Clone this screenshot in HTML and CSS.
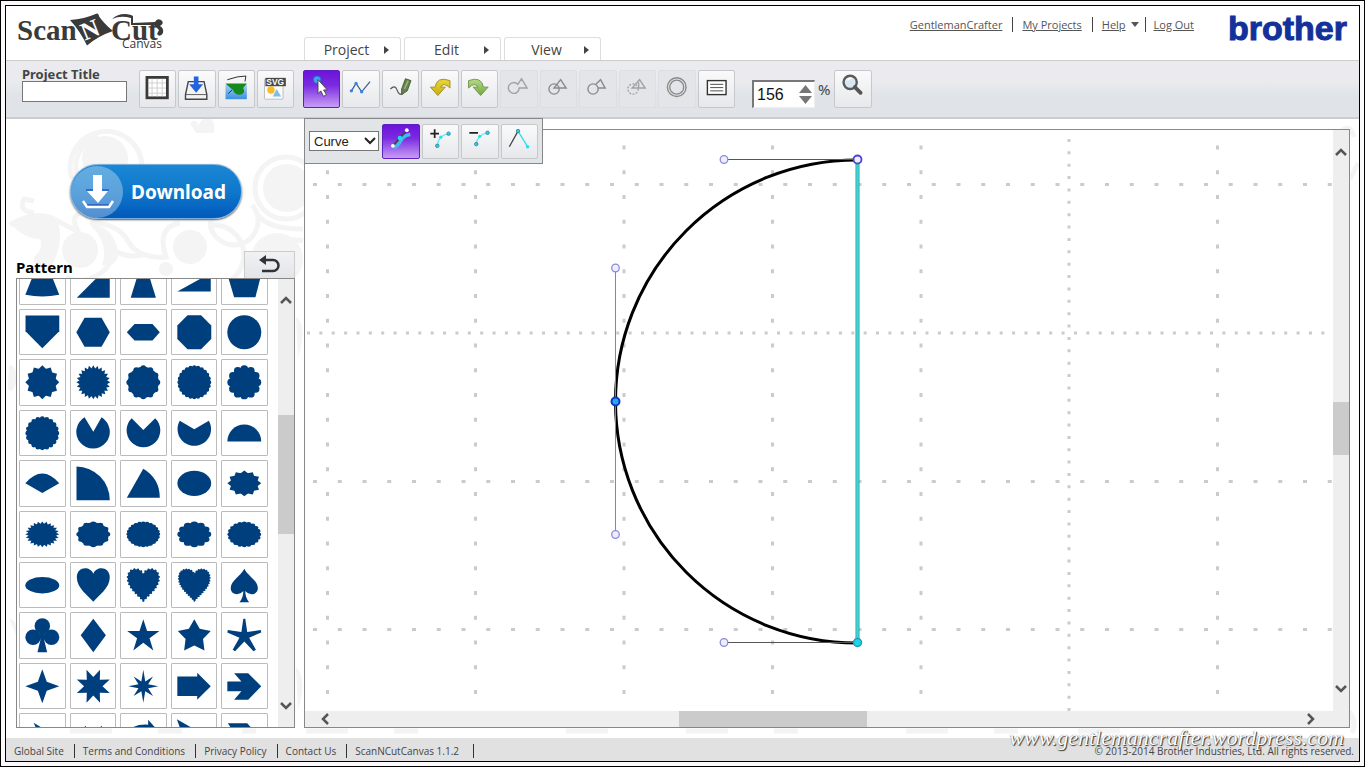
FILE: index.html
```html
<!DOCTYPE html>
<html lang="en">
<head>
<meta charset="utf-8">
<title>ScanNCut Canvas</title>
<link rel="stylesheet" href="styles.css">
</head>
<body>
<svg class="defs" width="0" height="0" aria-hidden="true">
  <defs>
    <symbol id="burst12" viewBox="-23 -23 46 46"><path id="sq" d="M0-17.5L17.5 0 0 17.5-17.5 0Z"/><use href="#sq" transform="rotate(30)"/><use href="#sq" transform="rotate(60)"/></symbol>
    <symbol id="burst24" viewBox="-23 -23 46 46"><g id="t4"><path id="tri" d="M0-17.500L15.200 8.750H-15.200Z"/><use href="#tri" transform="rotate(15)"/><use href="#tri" transform="rotate(30)"/><use href="#tri" transform="rotate(45)"/></g><use href="#t4" transform="rotate(60)"/></symbol>
    <symbol id="scallop12" viewBox="-23 -23 46 46"><circle r="16"/><circle r="14.500" fill="none" stroke="currentColor" stroke-width="6" stroke-linecap="round" stroke-dasharray="0 10" pathLength="120"/></symbol>
    <symbol id="scallop24" viewBox="-23 -23 46 46"><circle r="16.500"/><circle r="15.500" fill="none" stroke="currentColor" stroke-width="4" stroke-linecap="round" stroke-dasharray="0 5" pathLength="120"/></symbol>
    <symbol id="cloud12" viewBox="-23 -23 46 46"><circle r="15"/><circle r="13.500" fill="none" stroke="currentColor" stroke-width="8" stroke-linecap="round" stroke-dasharray="0 10" pathLength="120"/></symbol>
    <symbol id="scallop20" viewBox="-23 -23 46 46"><circle r="16"/><circle r="15" fill="none" stroke="currentColor" stroke-width="5" stroke-linecap="round" stroke-dasharray="0 6" pathLength="120"/></symbol>
    <path id="heart" d="M23 40C18 34 6 26 6 15C6 3 20 3 23 11C26 3 40 3 40 15C40 26 28 34 23 40Z"/>
    <linearGradient id="yel" x2="0" y2="1"><stop stop-color="#e9d83a"/><stop offset="1" stop-color="#c9ac10"/></linearGradient>
    <linearGradient id="grn" x2="0" y2="1"><stop stop-color="#b5d98c"/><stop offset="1" stop-color="#72a83c"/></linearGradient>
    <linearGradient id="sky" x2="0" y2="1"><stop stop-color="#9fd2f7"/><stop offset="1" stop-color="#3f8fe0"/></linearGradient>
  </defs>
</svg>
<div class="frame">
<div class="app">

<header class="header">
  <svg class="logo" width="150" height="40" viewBox="15 11 150 40" role="img" aria-label="ScanNCut Canvas">
    <g fill="#3a3a3a">
      <text class="logo-serif" x="17" y="40">Scan</text>
      <path d="M70 20Q84 19 97 13.500Q104 24 113 31Q98 36 87 45.500Q80 31 70 20Z"/>
      <path d="M77 20Q90 18 98 13.500L99 16Q91 21 79 22Z"/>
      <text class="logo-serif" x="111" y="40">Cut</text>
      <path d="M112 19Q120 12 131 15L133 16V23L155 22Q157 18 161 20Q165 23 160 26Q164 28 163 33Q160 38 157 34L159 30L154 25L131 25V18Q121 15 112 19Z"/>
      <text class="logo-sub" x="122" y="48">Canvas</text>
    </g>
    <text class="logo-n" x="81" y="38" transform="rotate(-22 90 30)">N</text>
  </svg>
  <nav class="tabs">
    <button class="tab">Project<svg width="6" height="8" viewBox="0 0 6 8"><path d="M0 0L5 4L0 8Z"/></svg></button>
    <button class="tab">Edit<svg width="6" height="8" viewBox="0 0 6 8"><path d="M0 0L5 4L0 8Z"/></svg></button>
    <button class="tab">View<svg width="6" height="8" viewBox="0 0 6 8"><path d="M0 0L5 4L0 8Z"/></svg></button>
  </nav>
  <nav class="account">
    <a href="#user">GentlemanCrafter</a><a href="#projects">My Projects</a><span class="help"><a href="#help">Help</a><svg width="8" height="5" viewBox="0 0 8 5"><path d="M0 0H8L4 5Z" fill="#555"/></svg></span><a href="#logout">Log Out</a>
  </nav>
  <div class="brother">brother</div>
</header>

<div class="toolbar">
  <div class="title-field">
    <label for="title">Project Title</label>
    <input id="title" type="text">
  </div>
  <div class="group files">
    <button class="tool" aria-label="Mat"><svg viewBox="0 0 38 38"><rect x="7.500" y="6.500" width="22" height="22" fill="#fff" stroke="#3a3a3a" stroke-width="3"/><path d="M13 8V27M18.500 8V27M24 8V27M9 12.500H28M9 18H28M9 23.500H28" stroke="#ccc"/></svg></button>
    <button class="tool" aria-label="Save"><svg viewBox="0 0 38 38"><path d="M10 11H27L30 25V30H7V25Z" fill="#f2f2f2" stroke="#444" stroke-width="1.500"/><path d="M7.500 25H29.500" stroke="#555"/><path d="M16 5.500H21V14H26L18.500 23L11 14H16Z" fill="#2462e0"/></svg></button>
    <button class="tool" aria-label="Trace image"><svg viewBox="0 0 38 38"><rect x="7" y="14" width="23" height="16" fill="url(#sky)"/><path d="M7 13H30L26 18Q29 23 24 25Q17 26 15 20L9 15Z" fill="#168a1d"/><path d="M9 9Q20 5 29 5L28 11M14 20L10 24" fill="none" stroke="#222"/></svg></button>
    <button class="tool" aria-label="Import SVG"><svg viewBox="0 0 38 38"><rect x="7" y="8" width="20" height="22" rx="1" fill="#fafafa" stroke="#bbb"/><rect x="8" y="7" width="22" height="9" fill="#484848"/><text x="9" y="15" class="svg-word">SVG</text><circle cx="14" cy="20" r="4" fill="#f5bd22"/><path d="M20 19L25 27H16Z" fill="#7dbfe8"/></svg></button>
  </div>
  <div class="group edit">
    <button class="tool active" aria-label="Select"><svg viewBox="0 0 38 38"><circle cx="14" cy="9" r="4" fill="#479ff1" stroke="#176fce"/><path d="M15 9V24L18 21L21 27L24 25L21 20H25Z" fill="#fff" stroke="#444"/></svg></button>
    <button class="tool" aria-label="Line"><svg viewBox="0 0 38 38"><path d="M9 21L14 13L20 22L29 11" fill="none" stroke="#345c8e" stroke-width="1.300"/><circle cx="9" cy="21" r="1.800" fill="#3587e5"/><circle cx="14" cy="13" r="1.800" fill="#3587e5"/><circle cx="20" cy="22" r="1.800" fill="#3587e5"/></svg></button>
    <button class="tool" aria-label="Pencil"><svg viewBox="0 0 38 38"><path d="M8 19Q13 14 15 20T21 24" fill="none" stroke="#555" stroke-width="1.300"/><path d="M24 8L30 10L26 21L20 25L20 19Z" fill="#66814b" stroke="#465c35"/><path d="M23 19L27 10" stroke="#9fb682" stroke-width="1.500"/></svg></button>
    <button class="tool" aria-label="Undo"><svg viewBox="0 0 38 38"><path d="M9 17H14Q16 5 30 10V18Q23 11 20 17H25L17 26Z" fill="url(#yel)" stroke="#a08e20"/></svg></button>
    <button class="tool" aria-label="Redo"><svg viewBox="0 0 38 38"><path d="M28 17H23Q21 5 7 10V18Q14 11 17 17H12L20 26Z" fill="url(#grn)" stroke="#73954b"/></svg></button>
    <button class="tool off" disabled aria-label="Weld"><svg viewBox="0 0 38 38"><path d="M18 14L22 8L28 18H19.500A5.800 5.800 0 1 1 18 14Z"/></svg></button>
    <button class="tool off dark" disabled aria-label="Overlap"><svg viewBox="0 0 38 38"><circle cx="14" cy="19" r="5.500"/><path d="M21 9L27 18H14Z"/></svg></button>
    <button class="tool off dark" disabled aria-label="Subtract"><svg viewBox="0 0 38 38"><circle cx="14" cy="19" r="5.500"/><path d="M17 14L22 9L27 18H19"/></svg></button>
    <button class="tool off" disabled aria-label="Divide"><svg viewBox="0 0 38 38"><circle cx="14" cy="19" r="5.500" stroke-dasharray="2 1.500"/><path d="M21 9L27 18H13ZM20 12V18"/></svg></button>
    <button class="tool off dark" disabled aria-label="Offset"><svg viewBox="0 0 38 38"><circle cx="19" cy="17" r="10"/><circle cx="19" cy="17" r="7.500"/></svg></button>
    <button class="tool" aria-label="Properties"><svg viewBox="0 0 38 38"><rect x="9" y="10" width="20" height="15" fill="#fff" stroke="#333" stroke-width="1.500"/><path d="M12 14H26M12 17.500H26M12 21H26" stroke="#444"/></svg></button>
  </div>
  <div class="zoom">
    <div class="spin">
      <input id="zoom" type="text" value="156" aria-label="Zoom">
      <div class="spin-arrows">
        <button aria-label="Zoom up"><svg width="13" height="8" viewBox="0 0 13 8"><path d="M6.500 0L13 8H0Z"/></svg></button>
        <button aria-label="Zoom down"><svg width="13" height="8" viewBox="0 0 13 8"><path d="M6.500 8L13 0H0Z"/></svg></button>
      </div>
    </div>
    <label for="zoom">%</label>
    <button class="tool" aria-label="Magnify"><svg viewBox="0 0 38 38"><circle cx="16" cy="12" r="7" fill="#d8e8f2" stroke="#5b5b5b" stroke-width="2.500"/><path d="M13 10Q15 7 18 8" stroke="#fff" stroke-width="1.500" fill="none"/><path d="M21 17L27 23" stroke="#555" stroke-width="4" stroke-linecap="round"/></svg></button>
  </div>
</div>

<main class="main">
  <svg class="flourish" width="100%" height="100%" aria-hidden="true">
    <g fill="none" stroke="#f4f4f4" stroke-width="5">
      <path d="M66 60A36 36 0 1 1 136 46M74 62A30 30 0 0 1 92 18"/>
      <circle cx="280" cy="69" r="31"/>
      <path d="M108 131A34 34 0 0 1 60 158M206 106A30 30 0 1 1 190 160"/>
      <path d="M204 102A24 24 0 1 0 246 86M246 170A42 42 0 0 1 297 122M252 96Q262 110 297 110"/>
      <path d="M4 106Q30 90 52 102T72 112Q64 98 74 94M28 94Q12 92 18 80L28 82"/>
      <path d="M84 104Q112 104 122 122T160 138Q150 108 174 104M104 128Q118 140 136 136"/>
      <path d="M1336 12Q1344 4 1348 18M1344 60L1352 44M1340 590Q1352 600 1346 614"/>
    </g>
    <g fill="#f4f4f4">
      <circle cx="99" cy="40" r="23"/><circle cx="281" cy="69" r="24"/><circle cx="74" cy="131" r="18"/><circle cx="184" cy="128" r="17"/><circle cx="271" cy="140" r="26"/><circle cx="160" cy="150" r="7"/><circle cx="170" cy="166" r="5"/>
      <path d="M4 104Q30 92 52 102Q58 124 46 146Q28 154 28 138Q38 130 34 120Q18 120 4 104Z"/>
      <path d="M184 4Q190 -2 192 6Q202 -8 208 4V14H190ZM84 106Q108 106 112 134Q112 148 96 146Q104 124 84 106Z"/>
      <path d="M3 246Q12 246 10 264Q6 276 2 270ZM290 198Q302 206 292 238ZM3 500Q12 500 10 516ZM290 548Q302 560 292 590Z"/>
    </g>
    <path d="M64 612H250M300 612H450M560 612H630M680 612H850M900 612H1160" fill="none" stroke="#f4f4f4" stroke-width="5" stroke-dasharray="42 46 24 60"/>
  </svg>

  <aside class="side">
    <button class="download"><svg width="55" height="54" viewBox="0 0 55 54"><circle cx="26" cy="27" r="26" fill="#fff" opacity=".32"/><path d="M22 10H31V26H37L27 38L16 26H22Z" fill="#fff"/><path d="M15 25H22M31 25H38M16 40H38" stroke="#1234b8"/><path d="M12 36L16 42H38L42 36" fill="none" stroke="#fff" stroke-width="2.500"/></svg><span>Download</span></button>
    <div class="pattern-head">
      <h2>Pattern</h2>
      <button class="back" aria-label="Back"><svg width="24" height="20" viewBox="0 0 24 20"><path d="M7 5H15A5 5 0 0 1 15 16H4" fill="none" stroke="#333" stroke-width="2.500"/><path d="M1 5L8 0V10Z" fill="#333"/></svg></button>
    </div>
    <div class="pattern-box">
      <div class="patterns">
        <button><svg viewBox="0 0 46 46"><path d="M17 8H29L40.500 37Q23 40.500 5.500 37Z"/></svg></button>
        <button><svg viewBox="0 0 46 46"><path d="M40 6V40H6Z"/></svg></button>
        <button><svg viewBox="0 0 46 46"><path d="M20.500 6H25.500L36 40H10Z"/></svg></button>
        <button><svg viewBox="0 0 46 46"><path d="M40 14.500V33.500H5.500Z"/></svg></button>
        <button><svg viewBox="0 0 46 46"><path d="M5 14H41L34.500 39.500H12.500Z"/></svg></button>

        <button><svg viewBox="0 0 46 46"><path d="M5.700 5.700H40.500V22L23 39.500L5.700 22Z"/></svg></button>
        <button><svg viewBox="0 0 46 46"><path d="M5.500 23L14 8H31.500L40 23L31.500 38H14Z"/></svg></button>
        <button><svg viewBox="0 0 46 46"><path d="M6 23L14 14.500H32.500L40 23L32.500 31.500H14Z"/></svg></button>
        <button><svg viewBox="0 0 46 46"><path d="M16 5.500H30L40.500 16V30L30 40.500H16L5.500 30V16Z"/></svg></button>
        <button><svg viewBox="0 0 46 46"><circle cx="23" cy="23" r="17.500"/></svg></button>

        <button><svg viewBox="0 0 46 46"><use href="#burst12"/></svg></button>
        <button><svg viewBox="0 0 46 46"><use href="#burst24"/></svg></button>
        <button><svg viewBox="0 0 46 46"><use href="#scallop12"/></svg></button>
        <button><svg viewBox="0 0 46 46"><use href="#scallop24"/></svg></button>
        <button><svg viewBox="0 0 46 46"><use href="#cloud12"/></svg></button>

        <button><svg viewBox="0 0 46 46"><use href="#scallop20"/></svg></button>
        <button><svg viewBox="0 0 46 46"><path d="M14 6.500L23 21.500L31.500 6.500A17.300 17.300 0 1 1 14 6.500Z"/></svg></button>
        <button><svg viewBox="0 0 46 46"><path d="M11 7.500L23 19.700L35.300 7.500A17.400 17.400 0 1 1 11 7.500Z"/></svg></button>
        <button><svg viewBox="0 0 46 46"><path d="M8 10L23 18.700L38 10A17.300 17.300 0 1 1 8 10Z"/></svg></button>
        <button><svg viewBox="0 0 46 46"><path d="M5.500 31.500A17.500 17.500 0 0 1 40.500 31.500Z"/></svg></button>

        <button><svg viewBox="0 0 46 46"><path d="M5.500 23Q23 3 40.500 23L23 33Z"/></svg></button>
        <button><svg viewBox="0 0 46 46"><path d="M5.700 5.700A34.500 34.500 0 0 1 40 40.500H5.700Z"/></svg></button>
        <button><svg viewBox="0 0 46 46"><path d="M23 8Q40 18 40 38H6Z"/></svg></button>
        <button><svg viewBox="0 0 46 46"><ellipse cx="23" cy="23" rx="17.400" ry="13"/></svg></button>
        <button class="oval"><svg viewBox="0 0 46 46"><use href="#burst12"/></svg></button>

        <button class="oval"><svg viewBox="0 0 46 46"><use href="#burst24"/></svg></button>
        <button class="oval"><svg viewBox="0 0 46 46"><use href="#scallop12"/></svg></button>
        <button class="oval"><svg viewBox="0 0 46 46"><use href="#scallop24"/></svg></button>
        <button class="oval"><svg viewBox="0 0 46 46"><use href="#cloud12"/></svg></button>
        <button class="oval"><svg viewBox="0 0 46 46"><use href="#scallop20"/></svg></button>

        <button><svg viewBox="0 0 46 46"><ellipse cx="23" cy="23" rx="17.500" ry="8.500"/></svg></button>
        <button><svg viewBox="0 0 46 46"><use href="#heart"/></svg></button>
        <button><svg viewBox="0 0 46 46"><g transform="translate(1.400 1.400) scale(.94)"><use href="#heart"/><use href="#heart" fill="none" stroke="currentColor" stroke-width="2.500" stroke-linecap="round" stroke-dasharray="0 4"/></g></svg></button>
        <button><svg viewBox="0 0 46 46"><g transform="translate(1.400 1.400) scale(.94)"><use href="#heart"/><use href="#heart" fill="none" stroke="currentColor" stroke-width="2" stroke-linecap="round" stroke-dasharray="0 3"/></g></svg></button>
        <button><svg viewBox="0 0 46 46"><path d="M23 6C27 14 37 18 37 26C37 33 28 34 24 29Q24 36 28 40.500H18Q22 36 22 29C18 34 9 33 9 26C9 18 19 14 23 6Z"/></svg></button>

        <button><svg viewBox="0 0 46 46"><circle cx="23" cy="13.500" r="8"/><circle cx="13.500" cy="25" r="8"/><circle cx="32.500" cy="25" r="8"/><path d="M20 18H26L25 28L28 40.500H18L21 28Z"/></svg></button>
        <button><svg viewBox="0 0 46 46"><path d="M23 6L36 23L23 40.500L10 23Z"/></svg></button>
        <button><svg viewBox="0 0 46 46"><path d="M23 6.500L26.900 18.600H39.600L29.400 26.100L33.300 38.600L23 30.700L12.700 38.600L16.600 26.100L6.400 18.600H19.100Z"/></svg></button>
        <button><svg viewBox="0 0 46 46"><path d="M23 6.500L28.600 16.300L40 18.600L32 26.900L33.500 38.600L23 33.500L12.500 38.600L14 26.900L6 18.600L17.400 16.300Z"/></svg></button>
        <button><svg viewBox="0 0 46 46"><path d="M22 6H24L26 19.500L40 17.500L40.500 20L28 25.500L35 38L32.500 39.500L23 29.500L13.500 39.500L11 38L18 25.500L5.500 20L6 17.500L20 19.500Z"/></svg></button>

        <button><svg viewBox="0 0 46 46"><path d="M23 5.500L27.600 18.400L40.500 23L27.600 27.600L23 40.500L18.400 27.600L5.500 23L18.400 18.400Z"/></svg></button>
        <button><svg viewBox="0 0 46 46"><path d="M23 13.500L30 6L29.700 16.300L40 16L32.500 23L40 30L29.700 29.700L30 40L23 32.500L16 40L16.300 29.700L6 30L13.500 23L6 16L16.300 16.300L16 6Z"/></svg></button>
        <button><svg viewBox="0 0 46 46"><path d="M23 6L25 18L33 13L28 21L38.500 23L28 25L33 33L25 28L23 40L21 28L13 33L18 25L7.500 23L18 21L13 13L21 18Z"/></svg></button>
        <button><svg viewBox="0 0 46 46"><path d="M5.500 13H26V9L40 23L26 37V33H5.500Z"/></svg></button>
        <button><svg viewBox="0 0 46 46"><path d="M5.500 18H20L12.500 9.500H27L40.500 23L27 37H12.500L20 28H5.500Z"/></svg></button>

        <button><svg viewBox="0 0 46 46"><path d="M14 9L29 18L22 26Z"/></svg></button>
        <button><svg viewBox="0 0 46 46"><path d="M10 18L15 12L17 18ZM29 18L31 12L36 18Z"/></svg></button>
        <button><svg viewBox="0 0 46 46"><path d="M5 20Q12 10 28 11V6L38 17L28 26V18Z"/></svg></button>
        <button><svg viewBox="0 0 46 46"><path d="M5 5.500L36 23L14 30Z"/></svg></button>
        <button><svg viewBox="0 0 46 46"><path d="M6 9.500H26L38 23L26 37H6L15 23Z"/></svg></button>
      </div>
      <div class="bar bar-v list-bar">
        <svg width="14" height="16" viewBox="0 0 14 16"><path d="M2 11L7 6L12 11"/></svg>
        <i class="before"></i><i class="thumb"></i><i class="after"></i>
        <svg width="14" height="16" viewBox="0 0 14 16"><path d="M2 6L7 11L12 6"/></svg>
      </div>
    </div>
  </aside>

  <section class="work">
    <div class="curve-bar">
      <div class="pick"><select aria-label="Segment type"><option>Curve</option></select><svg width="14" height="10" viewBox="0 0 14 10"><path d="M2 2L7 7L12 2" fill="none" stroke="#222" stroke-width="2"/></svg></div>
      <div class="curve-tools">
        <button class="tool active" aria-label="Edit points"><svg viewBox="0 0 38 38"><path d="M11 26Q16 24 19 18T30 11" fill="none" stroke="#43b7ef" stroke-width="4"/><path d="M10 24L26 6" stroke="#444" stroke-width="2"/><circle cx="26" cy="6" r="2.200" fill="#fff"/><circle cx="10" cy="24" r="2.200" fill="#fff"/><circle cx="18" cy="15" r="2.500" fill="#20dce8"/></svg></button>
        <button class="tool" aria-label="Add point"><svg viewBox="0 0 38 38"><path d="M7 10H17M12 5V15" stroke="#222" stroke-width="2"/><path d="M15 24Q16 12 28 10" fill="none" stroke="#74e4ee" stroke-width="1.500"/><circle cx="15" cy="24" r="2" fill="#35cce0" stroke="#258ca5"/><circle cx="19" cy="14" r="1.800" fill="#16e7ef"/><circle cx="28" cy="10" r="2" fill="#35cce0" stroke="#258ca5"/></svg></button>
        <button class="tool" aria-label="Delete point"><svg viewBox="0 0 38 38"><path d="M7 9H17" stroke="#222" stroke-width="2"/><path d="M15 22Q16 11 28 9" fill="none" stroke="#74e4ee" stroke-width="1.500"/><circle cx="15" cy="22" r="2" fill="#35cce0" stroke="#258ca5"/><circle cx="19" cy="13" r="1.800" fill="#16e7ef"/><circle cx="28" cy="9" r="2" fill="#35cce0" stroke="#258ca5"/></svg></button>
        <button class="tool" aria-label="Corner"><svg viewBox="0 0 38 38"><path d="M7 25L17 7" stroke="#444" stroke-width="1.500"/><path d="M17 7L28 25" stroke="#2fdde8" stroke-width="1.500"/><circle cx="17" cy="7" r="2" fill="#35cce0" stroke="#258ca5"/><circle cx="28" cy="25" r="2" fill="#16e7ef"/></svg></button>
      </div>
    </div>
    <div class="canvas-box">
      <svg class="canvas" width="100%" height="100%" role="img" aria-label="Half circle">
        <g stroke="#cbcbcb" stroke-width="3" fill="none">
          <path stroke-dasharray="4 20.750" d="M22.500 15.500V580M170.500 15.500V580M319 15.500V580M467.500 15.500V580M616 15.500V580M912.500 15.500V580"/>
          <path stroke-dasharray="4 20.750" d="M8 54.500H1028M8 351.500H1028M8 499.500H1028"/>
          <path stroke-dasharray="3 9.370" d="M764 9V600M2 203H1028"/>
        </g>
        <path d="M552 30A241.500 241.500 0 0 0 552 513" fill="none" stroke="#000" stroke-width="3"/>
        <path d="M552.500 30V513" stroke="#5b8a8a" stroke-width="4"/>
        <path d="M552.500 30V513" stroke="#2fdada" stroke-width="2.500"/>
        <path d="M419 29.500H552M419 512.500H552" stroke="#555"/>
        <path d="M310.500 138V404" stroke="#888"/>
        <g fill="#eeeeff" stroke="#8b8bd9" stroke-width="1.300"><circle cx="419" cy="29.500" r="3.800"/><circle cx="419" cy="512.500" r="3.800"/><circle cx="310.500" cy="138" r="3.800"/><circle cx="310.500" cy="404.500" r="3.800"/></g>
        <circle cx="552.500" cy="29.500" r="4" fill="#eef" stroke="#4a43cf" stroke-width="1.800"/>
        <circle cx="552.500" cy="512.500" r="4" fill="#1ed3e6" stroke="#1a9fc4" stroke-width="1.500"/>
        <circle cx="310.500" cy="271.500" r="4" fill="#28a8e8" stroke="#0a37c8" stroke-width="2"/>
      </svg>
      <div class="bar bar-v work-v">
        <svg width="14" height="16" viewBox="0 0 14 16"><path d="M2 11L7 6L12 11"/></svg>
        <i class="before"></i><i class="thumb"></i><i class="after"></i>
        <svg width="14" height="16" viewBox="0 0 14 16"><path d="M2 6L7 11L12 6"/></svg>
      </div>
      <div class="bar work-h">
        <svg width="16" height="14" viewBox="0 0 16 14"><path d="M11 2L6 7L11 12"/></svg>
        <i class="before"></i><i class="thumb"></i><i class="after"></i>
        <svg width="16" height="14" viewBox="0 0 16 14"><path d="M5 2L10 7L5 12"/></svg>
      </div>
    </div>
  </section>
</main>

<footer class="footer">
  <nav class="foot-links"><a href="#site">Global Site</a><a href="#terms">Terms and Conditions</a><a href="#privacy">Privacy Policy</a><a href="#contact">Contact Us</a><span>ScanNCutCanvas 1.1.2</span></nav>
  <small>© 2013-2014 Brother Industries, Ltd. All rights reserved.</small>
</footer>
<div class="watermark">www.gentlemancrafter.wordpress.com</div>
</div>
</div>
</body>
</html>
```
FILE: styles.css
```css
* { box-sizing: border-box; }
body { margin: 0; font-family: "Noto Sans", "Open Sans", sans-serif; font-size: 12px; color: #444; background: #fff; }
button { font: inherit; color: inherit; padding: 0; margin: 0; }
svg { display: block; }
.defs { position: absolute; }
.frame { height: 100vh; border: 1px solid #000; padding: 4px; background: #fbf9fb; }
.app { position: relative; height: 100%; border: 1px solid #000; display: flex; flex-direction: column; background: #fff; }

.header { height: 54px; display: flex; flex: none; padding: 5px 12px 0 9px; }
.logo-serif { font: bold 29px "Liberation Serif", serif; }
.logo-n { font: bold 25px "Liberation Serif", serif; fill: #fff; }
.logo-sub { font: 12px "Open Sans", sans-serif; }
.tabs { display: flex; gap: 3px; align-self: flex-end; margin-left: 139px; }
.tab { width: 97px; height: 23px; border: 1px solid #ddd; border-bottom: 0; border-radius: 3px 3px 0 0; background: #fff; font: 14px "Open Sans", sans-serif; display: grid; grid-template-columns: 1fr 10px; align-items: center; padding: 1px 8px 0 6px; }
.tab svg { fill: #444; justify-self: center; }
.account { margin-left: auto; margin-right: 34px; display: flex; align-items: center; height: 16px; margin-top: 5px; font: 11px "Open Sans", sans-serif; }
.account > * + * { border-left: 1px solid #444; margin-left: 10px; padding-left: 9px; }
.account a { color: #555; }
.help { display: flex; align-items: center; gap: 5px; }
.account .help + a { margin-left: 6px; padding-left: 8px; }
.brother { font: bold 34px/34px "Liberation Sans", sans-serif; color: #14309a; -webkit-text-stroke: 1px #14309a; }

.toolbar { flex: none; height: 59px; border-top: 1px solid #ccc; border-bottom: 2px solid #ccc; background: linear-gradient(#ebebef 0, #ebebef 35%, #e0e4e8 60%, #e0e4e8); display: flex; padding: 9px 0 0 16px; }
.title-field { width: 105px; margin-right: 12px; margin-top: -2px; }
.title-field label { display: block; font-weight: bold; font-size: 13px; line-height: 13px; white-space: nowrap; }
.title-field input { display: block; width: 105px; height: 21px; border: 1px solid #777; background: #fff; }
.group { display: grid; grid-auto-flow: column; grid-auto-columns: 1fr; gap: 2px; height: 38px; }
.files { width: 155px; margin-right: 9px; }
.edit { width: 432px; margin-right: 17px; }
.tool { border: 1px solid #c6c8cc; border-radius: 2px; background: linear-gradient(#fafafb, #e6e8eb); min-width: 0; height: 38px; overflow: hidden; }
.tool svg { width: 100%; height: 100%; }
.tool.active { border-color: #5f20c0; background: linear-gradient(#6d13dc 0, #7a2be0 40%, #c79df5); }
.tool.off { border-color: #dcdee1; background: #e3e5e8; }
.tool.off svg { fill: none; stroke: #a2a2a2; stroke-width: 1.5px; }
.tool.off.dark svg { stroke: #8a8a8a; }
.svg-word { font: bold 9px "Liberation Sans", sans-serif; fill: #fff; }
.zoom { display: flex; }
.zoom > .tool { width: 38px; margin-left: 3px; }
.zoom label { font-size: 15px; line-height: 38px; margin-left: 3px; width: 13px; }
.spin { display: flex; width: 63px; height: 28px; margin-top: 10px; border: 1px solid #eee; border-top: 2px solid #777; border-left: 2px solid #777; background: #fff; }
.spin input { width: 45px; border: 0; padding: 0 0 0 3px; background: none; font: 16px "Liberation Sans", sans-serif; color: #111; }
.spin-arrows { display: flex; flex-direction: column; justify-content: space-evenly; }
.spin-arrows button { border: 0; background: none; }
.spin-arrows svg { fill: #777; }

.main { position: relative; flex: 1; min-height: 0; display: flex; }
.flourish { position: absolute; inset: 0; }
.side { position: relative; flex: none; width: 298px; padding: 45px 9px 10px 10px; display: flex; flex-direction: column; }
.download { flex: none; align-self: flex-start; margin-left: 54px; width: 172px; height: 55px; border: 1px solid #7ab0dd; border-radius: 28px; background: linear-gradient(#1b87d3, #0f78cc 50%, #0259ba); box-shadow: 0 1px 2px #555; display: flex; align-items: center; color: #fff; font: bold 19px "Noto Sans", sans-serif; gap: 5px; }
.pattern-head { display: flex; justify-content: space-between; margin-top: 32px; height: 27px; flex: none; }
.pattern-head h2 { margin: 4px 0 0; font-size: 15px; line-height: 24px; color: #000; }
.back { width: 51px; border: 1px solid #ccc; border-bottom: 0; background: linear-gradient(#f2f2f3, #e2e5e9); display: grid; place-items: center; }
.pattern-box { flex: 1; min-height: 0; border: 1px solid #888; background: #fff; display: flex; align-items: flex-start; overflow: hidden; }
.patterns { flex: 1; display: grid; grid-template-columns: repeat(5, 1fr); gap: 4px; margin: -21px 10px 0 2px; }
.patterns button { min-width: 0; border: 1px solid #bbb; border-radius: 1px; background: #fff; color: #003f7d; overflow: hidden; }
.patterns svg { width: 100%; height: auto; fill: currentColor; }
.patterns .oval svg { transform: scaleY(0.76); }

.bar { display: flex; align-items: center; background: #eee; }
.bar svg { flex: none; fill: none; stroke: #555; stroke-width: 2.5px; }
.bar-v { flex-direction: column; width: 16px; }
.thumb { background: #cbcbcb; align-self: stretch; }
.list-bar { flex: none; align-self: stretch; padding: 13px 0 14px; }
.list-bar .before { flex: 107; }
.list-bar .thumb { flex: 120; }
.list-bar .after { flex: 163; }
.work-v { padding: 14px 0 15px; }
.work-v .before { flex: 242; }
.work-v .thumb { flex: 54; }
.work-v .after { flex: 225; }
.work-h { grid-column: 1 / 3; height: 16px; padding: 0 30px 0 12px; }
.work-h .before { flex: 346; }
.work-h .thumb { flex: 188; }
.work-h .after { flex: 436; }

.work { position: relative; flex: 1; min-width: 0; padding: 10px 9px 10px 0; }
.canvas-box { height: 100%; border: 1px solid #888; background: #fff; display: grid; grid-template-columns: minmax(0, 1fr) 16px; grid-template-rows: minmax(0, 1fr) 16px; overflow: hidden; }
.curve-bar { position: absolute; top: -1px; left: 0; display: flex; align-items: center; gap: 3px; width: 239px; height: 46px; padding: 0 4px; border: 1px solid #888; background: #e2e5e8; }
.pick { position: relative; width: 70px; flex: none; }
.pick select { appearance: none; display: block; width: 100%; height: 20px; border: 1px solid #777; border-radius: 0; background: #fff; color: #222; padding: 0 4px; font: 13px "Liberation Sans", sans-serif; }
.pick svg { position: absolute; right: 2px; top: 5px; pointer-events: none; }
.curve-tools { flex: 1; display: grid; grid-template-columns: repeat(4, 1fr); gap: 2px; }
.curve-tools .tool { height: 35px; }

.footer { flex: none; height: 23px; background: #e1e1e1; display: flex; justify-content: space-between; align-items: center; padding: 3px 5px 0 8px; font: 10px "Open Sans", sans-serif; }
.footer a { color: inherit; text-decoration: none; }
.foot-links { display: flex; line-height: 14px; }
.foot-links > * { padding-right: 10px; border-right: 1px solid #333; margin-right: 8px; }
.foot-links > :last-child { padding-right: 14px; }
.footer small { font-size: 10px; }
.watermark { position: absolute; right: 15px; bottom: 11px; font: italic 22px/24px "Liberation Serif", serif; color: #fff; text-shadow: 1px 1px 1px #333, 0 0 1px #666; white-space: nowrap; }
```
